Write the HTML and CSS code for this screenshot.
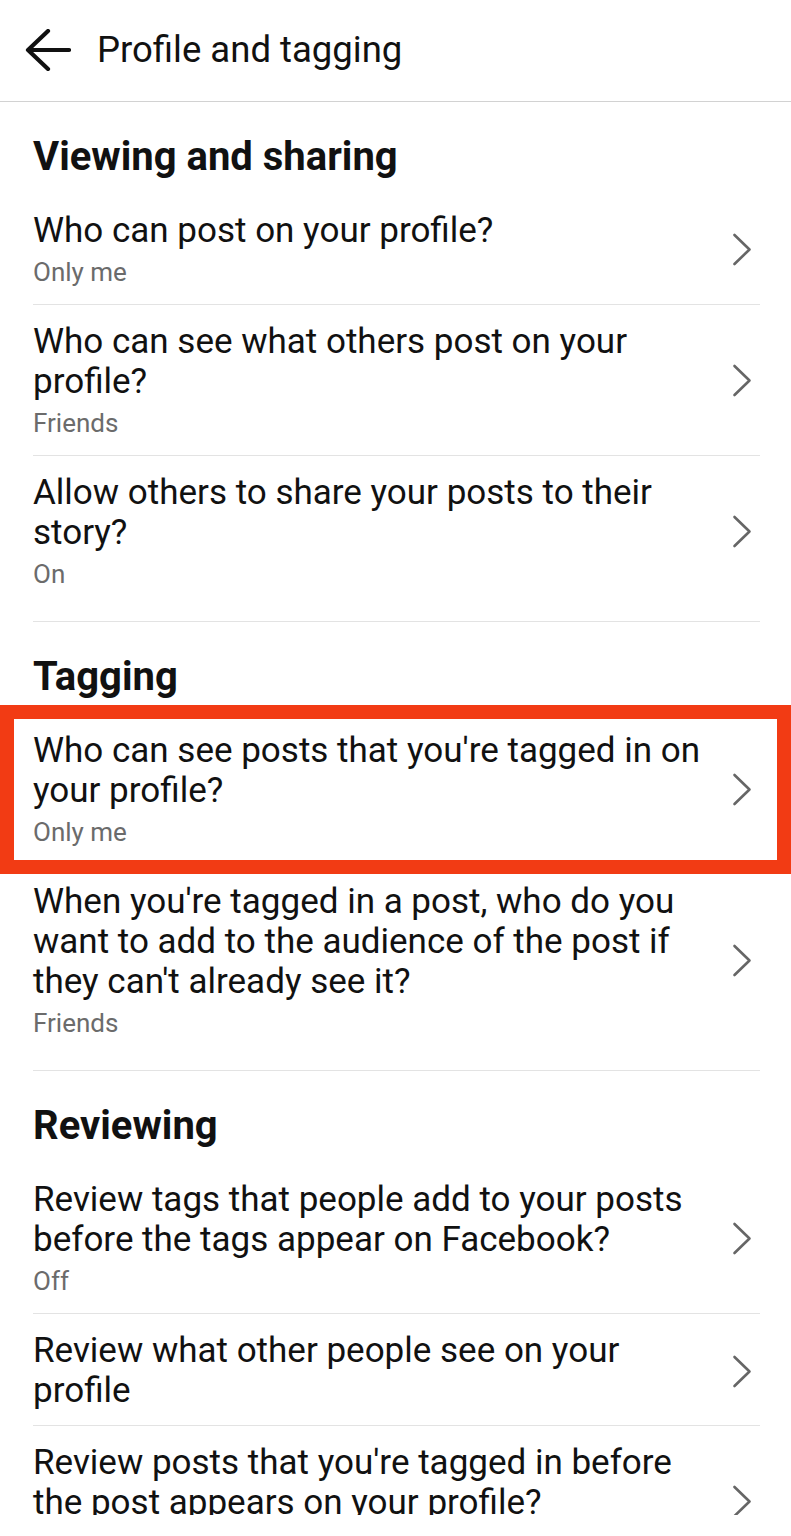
FILE: index.html
```html
<!DOCTYPE html>
<html lang="en">
<head>
<meta charset="utf-8">
<title>Profile and tagging</title>
<link rel="stylesheet" href="styles.css">
</head>
<body>
<header class="topbar">
  <svg class="back" width="46" height="42" viewBox="0 0 46 42" aria-hidden="true">
    <path d="M44 21H3M23 2L3 21L23 40" fill="none" stroke="#111" stroke-width="4.2" stroke-linecap="round" stroke-linejoin="round"/>
  </svg>
  <h1 class="title">Profile and tagging</h1>
</header>
<main class="content">
  <section class="section">
    <h2 class="heading">Viewing and sharing</h2>
    <div class="row">
      <div class="text"><div class="label">Who can post on your profile?</div><div class="value">Only me</div></div>
      <svg class="chev" width="20" height="33" viewBox="0 0 20 33" aria-hidden="true"><path d="M2.5 2L17.5 16.5L2.5 31" fill="none" stroke="#666" stroke-width="2.6" stroke-linecap="round" stroke-linejoin="round"/></svg>
    </div>
    <div class="row">
      <div class="text"><div class="label">Who can see what others post on your profile?</div><div class="value">Friends</div></div>
      <svg class="chev" width="20" height="33" viewBox="0 0 20 33" aria-hidden="true"><path d="M2.5 2L17.5 16.5L2.5 31" fill="none" stroke="#666" stroke-width="2.6" stroke-linecap="round" stroke-linejoin="round"/></svg>
    </div>
    <div class="row">
      <div class="text"><div class="label">Allow others to share your posts to their story?</div><div class="value">On</div></div>
      <svg class="chev" width="20" height="33" viewBox="0 0 20 33" aria-hidden="true"><path d="M2.5 2L17.5 16.5L2.5 31" fill="none" stroke="#666" stroke-width="2.6" stroke-linecap="round" stroke-linejoin="round"/></svg>
    </div>
  </section>
  <section class="section">
    <h2 class="heading">Tagging</h2>
    <div class="row">
      <div class="text"><div class="label">Who can see posts that you're tagged in on your profile?</div><div class="value">Only me</div></div>
      <svg class="chev" width="20" height="33" viewBox="0 0 20 33" aria-hidden="true"><path d="M2.5 2L17.5 16.5L2.5 31" fill="none" stroke="#666" stroke-width="2.6" stroke-linecap="round" stroke-linejoin="round"/></svg>
      <div class="redbox"></div>
    </div>
    <div class="row">
      <div class="text"><div class="label">When you're tagged in a post, who do you want to add to the audience of the post if they can't already see it?</div><div class="value">Friends</div></div>
      <svg class="chev" width="20" height="33" viewBox="0 0 20 33" aria-hidden="true"><path d="M2.5 2L17.5 16.5L2.5 31" fill="none" stroke="#666" stroke-width="2.6" stroke-linecap="round" stroke-linejoin="round"/></svg>
    </div>
  </section>
  <section class="section">
    <h2 class="heading">Reviewing</h2>
    <div class="row">
      <div class="text"><div class="label">Review tags that people add to your posts before the tags appear on Facebook?</div><div class="value">Off</div></div>
      <svg class="chev" width="20" height="33" viewBox="0 0 20 33" aria-hidden="true"><path d="M2.5 2L17.5 16.5L2.5 31" fill="none" stroke="#666" stroke-width="2.6" stroke-linecap="round" stroke-linejoin="round"/></svg>
    </div>
    <div class="row single">
      <div class="text"><div class="label">Review what other people see on your profile</div></div>
      <svg class="chev" width="20" height="33" viewBox="0 0 20 33" aria-hidden="true"><path d="M2.5 2L17.5 16.5L2.5 31" fill="none" stroke="#666" stroke-width="2.6" stroke-linecap="round" stroke-linejoin="round"/></svg>
    </div>
    <div class="row">
      <div class="text"><div class="label">Review posts that you're tagged in before the post appears on your profile?</div><div class="value">Off</div></div>
      <svg class="chev" width="20" height="33" viewBox="0 0 20 33" aria-hidden="true"><path d="M2.5 2L17.5 16.5L2.5 31" fill="none" stroke="#666" stroke-width="2.6" stroke-linecap="round" stroke-linejoin="round"/></svg>
    </div>
  </section>
</main>
</body>
</html>
```
FILE: styles.css
```css
* { box-sizing: border-box; }
html { margin: 0; padding: 0; background: #fff; }
body {
  margin: 0;
  padding: 0;
  background: #fff;
  font-family: Roboto, "Noto Sans", "Liberation Sans", sans-serif;
  color: #111;
  width: 791px;
  height: 1515px;
  overflow: hidden;
}
.topbar {
  height: 102px;
  border-bottom: 1px solid #d2d2d2;
  display: flex;
  align-items: center;
  padding-left: 25px;
  padding-bottom: 1px;
}
.back { flex: none; display: block; }
.title {
  margin: 0 0 0 26px;
  font-size: 36.5px;
  font-weight: 400;
  line-height: 44px;
  color: #111;
}
.content { padding: 0 31px 0 33px; }
.section {
  padding-top: 31px;
  padding-bottom: 15px;
  border-bottom: 1px solid #e3e3e3;
}
.heading {
  margin: 0 0 13px 0;
  font-size: 40px;
  font-weight: 700;
  line-height: 48px;
  color: #111;
}
.row {
  position: relative;
  display: flex;
  align-items: center;
  padding: 17px 0 16px 0;
  border-bottom: 1px solid #e3e3e3;
}
.row.single { padding-bottom: 14px; }
.row:last-child { border-bottom: none; }
.text { flex: 1; min-width: 0; padding-right: 20px; }
.label {
  font-size: 35px;
  line-height: 40px;
  color: #111;
}
.value {
  margin-top: 5px;
  font-size: 26px;
  line-height: 32px;
  color: #6b6b6b;
}
.chev { flex: none; display: block; margin-right: 8px; }
.redbox {
  position: absolute;
  top: -9px;
  bottom: -10px;
  left: -33px;
  right: -31px;
  border: 14px solid #f23b14;
  pointer-events: none;
}
```
